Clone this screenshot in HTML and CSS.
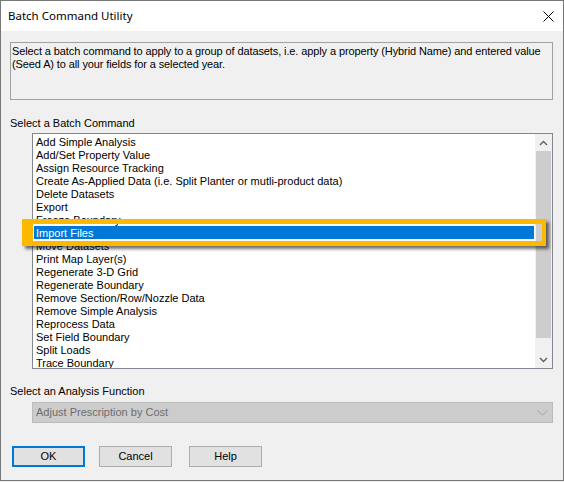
FILE: index.html
```html
<!DOCTYPE html>
<html>
<head>
<meta charset="utf-8">
<title>Batch Command Utility</title>
<link rel="stylesheet" href="styles.css">
</head>
<body>
<div class="window">
  <div class="titlebar">
    <span class="title">Batch Command Utility</span>
    <svg class="close" width="11" height="11" viewBox="0 0 11 11"><path d="M0.5 0.5 L10.5 10.5 M10.5 0.5 L0.5 10.5" stroke="#000" stroke-width="1" fill="none"/></svg>
  </div>
  <div class="content">
    <div class="desc">Select a batch command to apply to a group of datasets, i.e. apply a property (Hybrid Name) and entered value<br>(Seed A) to all your fields for a selected year.</div>
    <div class="label first">Select a Batch Command</div>
    <div class="listbox">
      <ul class="items">
        <li>Add Simple Analysis</li>
        <li>Add/Set Property Value</li>
        <li>Assign Resource Tracking</li>
        <li>Create As-Applied Data (i.e. Split Planter or mutli-product data)</li>
        <li>Delete Datasets</li>
        <li>Export</li>
        <li>Freeze Boundary</li>
        <li class="selected">Import Files</li>
        <li>Move Datasets</li>
        <li>Print Map Layer(s)</li>
        <li>Regenerate 3-D Grid</li>
        <li>Regenerate Boundary</li>
        <li>Remove Section/Row/Nozzle Data</li>
        <li>Remove Simple Analysis</li>
        <li>Reprocess Data</li>
        <li>Set Field Boundary</li>
        <li>Split Loads</li>
        <li>Trace Boundary</li>
      </ul>
      <div class="vscroll">
        <div class="sbtn"><svg width="9" height="6" viewBox="0 0 9 6"><path d="M1 5 L4.5 1.5 L8 5" stroke="#606060" stroke-width="1.4" fill="none"/></svg></div>
        <div class="thumb"></div>
        <div class="track"></div>
        <div class="sbtn"><svg width="9" height="6" viewBox="0 0 9 6"><path d="M1 1 L4.5 4.5 L8 1" stroke="#606060" stroke-width="1.4" fill="none"/></svg></div>
      </div>
    </div>
    <div class="label second">Select an Analysis Function</div>
    <div class="combo">
      <span class="combo-text">Adjust Prescription by Cost</span>
      <svg class="combo-arrow" width="11" height="6" viewBox="0 0 11 6"><path d="M0.5 0.5 L5.5 5 L10.5 0.5" stroke="#a6a6a6" stroke-width="1" fill="none"/></svg>
    </div>
    <div class="buttons">
      <div class="btn default">OK</div>
      <div class="btn cancel">Cancel</div>
      <div class="btn help">Help</div>
    </div>
  </div>
  <div class="callout"></div>
</div>
</body>
</html>
```
FILE: styles.css
```css
* { box-sizing: border-box; }
html, body { margin: 0; padding: 0; }
body {
  width: 564px;
  height: 482px;
  background: #f0f0f0;
  font-family: "Liberation Sans", Arial, sans-serif;
  font-size: 11px;
  color: #000;
}
.window {
  position: relative;
  width: 564px;
  height: 481px;
  border: 1px solid #777777;
  background: #f0f0f0;
  overflow: hidden;
}
.titlebar {
  height: 30px;
  background: #ffffff;
  display: flex;
  align-items: center;
  justify-content: space-between;
  padding-left: 7px;
  padding-right: 9px;
}
.title {
  font-family: "Noto Sans", "Open Sans", sans-serif;
  font-size: 11.5px;
  line-height: 16px;
}
.close { display: block; margin-top: 1px; }
.content {
  padding-left: 9px;
}
.desc {
  margin-top: 11px;
  width: 543px;
  height: 58px;
  border: 1px solid #a0a0a0;
  padding: 2px 0 0 1px;
  line-height: 13px;
  white-space: nowrap;
  letter-spacing: -0.01em;
}
.label {
  line-height: 13px;
  white-space: nowrap;
}
.label.first { margin-top: 17px; }
.label.second { margin-top: 16px; }
.listbox {
  margin-top: 3px;
  margin-left: 22px;
  width: 521px;
  height: 236px;
  border: 1px solid #828790;
  background: #ffffff;
  display: flex;
  overflow: hidden;
}
.items {
  list-style: none;
  margin: 0;
  padding: 1px;
  flex: 1;
  overflow: hidden;
}
.items li {
  height: 13px;
  line-height: 12px;
  padding-top: 1px;
  padding-left: 2px;
  white-space: nowrap;
}
.items li.selected {
  background: #0078d7;
  color: #ffffff;
}
.vscroll {
  width: 17px;
  display: flex;
  flex-direction: column;
  background: #f0f0f0;
}
.sbtn {
  height: 17px;
  display: flex;
  align-items: center;
  justify-content: center;
  background: #f0f0f0;
}
.thumb {
  height: 187px;
  margin: 0 1px;
  background: #cdcdcd;
}
.track { flex: 1; }
.combo {
  margin-top: 4px;
  margin-left: 22px;
  width: 521px;
  height: 21px;
  border: 1px solid #bcbcbc;
  background: #cccccc;
  display: flex;
  align-items: center;
  justify-content: space-between;
  padding-left: 3px;
  padding-right: 4px;
}
.combo-text { color: #6d6d6d; line-height: 13px; }
.combo-arrow { display: block; }
.buttons {
  margin-top: 23px;
  margin-left: 2px;
  display: flex;
}
.btn {
  width: 73px;
  height: 21px;
  border: 1px solid #adadad;
  background: #e1e1e1;
  display: flex;
  align-items: center;
  justify-content: center;
  line-height: 13px;
}
.btn.default { border: 2px solid #0078d7; }
.btn.cancel { margin-left: 14px; }
.btn.help { margin-left: 17px; }
.callout {
  position: absolute;
  left: 21px;
  top: 218px;
  width: 524px;
  height: 27px;
  border-style: solid;
  border-color: #fcb900;
  border-width: 5px 4px 5px 11px;
  box-shadow: 3px 3px 3px rgba(0, 0, 0, 0.55);
}
```
